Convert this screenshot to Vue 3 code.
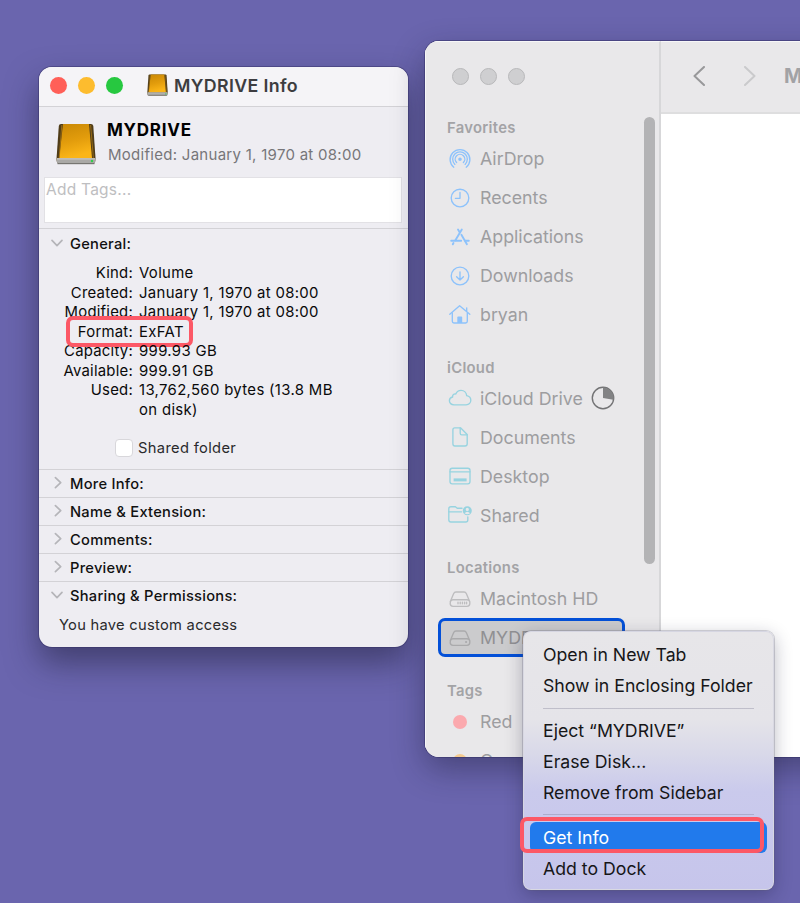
<template>
  <div class="screen">
    <section class="window info">
      <header class="info-title">
        <span class="light red"></span>
        <span class="light yellow"></span>
        <span class="light green"></span>
        <DriveIcon class="drive-small" />
        <h1>MYDRIVE Info</h1>
      </header>

      <div class="summary">
        <div class="summary-head">
          <DriveIcon class="drive-large" />
          <div>
            <h2>MYDRIVE</h2>
            <p class="modified">Modified: January 1, 1970 at 08:00</p>
          </div>
        </div>
        <div class="tags-input">Add Tags...</div>
      </div>

      <div class="general">
        <div class="section-head">
          <Chevron open />
          <span>General:</span>
        </div>
        <dl>
          <template v-for="row in details" :key="row.label">
            <dt>{{ row.label }}:</dt>
            <dd>
              {{ row.value }}
              <span v-if="row.label === 'Format'" class="mark mark-format"></span>
            </dd>
          </template>
        </dl>
        <label class="shared-folder">
          <span class="checkbox"></span>
          <span>Shared folder</span>
        </label>
      </div>

      <div v-for="name in sections" :key="name" class="section-head collapsed">
        <Chevron />
        <span>{{ name }}:</span>
      </div>
      <div class="section-head collapsed">
        <Chevron open />
        <span>Sharing &amp; Permissions:</span>
      </div>
      <p class="access">You have custom access</p>
    </section>

    <section class="window finder">
      <aside class="sidebar">
        <div class="inactive-lights">
          <span v-for="n in 3" :key="n"></span>
        </div>
        <div v-for="group in groups" :key="group.title" class="group">
          <h3>{{ group.title }}</h3>
          <ul>
            <li v-for="item in group.items" :key="item.name" :class="{ selected: item.selected }">
              <span v-if="item.dot" class="dot" :class="item.dot"></span>
              <svg v-else class="icon" :class="[group.tone, `icon-${item.icon}`]" viewBox="0 0 24 24">
                <path v-for="d in icons[item.icon].lines" :key="d" :d="d" />
                <path v-for="d in icons[item.icon].fills" :key="d" :d="d" class="solid" />
              </svg>
              <span class="name">{{ item.name }}</span>
              <svg v-if="item.progress" class="progress" viewBox="0 0 24 24">
                <circle cx="12" cy="12" r="10.7" />
                <path d="M12 12V1.5A10.5 10.5 0 0 1 22.4 13.8Z" />
              </svg>
            </li>
          </ul>
        </div>
        <div class="scrollbar"></div>
      </aside>
      <main class="content">
        <div class="toolbar">
          <svg class="nav" viewBox="0 0 12 20"><path d="M11 1 1.5 10 11 19" /></svg>
          <svg class="nav forward" viewBox="0 0 12 20"><path d="M1 1 10.5 10 1 19" /></svg>
          <span class="path-title">MYDRIVE</span>
        </div>
      </main>
    </section>

    <nav class="menu">
      <template v-for="(block, i) in menu" :key="i">
        <hr v-if="i > 0">
        <button v-for="item in block" :key="item" :class="{ active: item === 'Get Info' }">
          <span>{{ item }}</span>
          <i v-if="item === 'Get Info'" class="mark mark-info"></i>
        </button>
      </template>
    </nav>
  </div>
</template>

<script setup>
import { h } from 'vue'

const details = [
  { label: 'Kind', value: 'Volume' },
  { label: 'Created', value: 'January 1, 1970 at 08:00' },
  { label: 'Modified', value: 'January 1, 1970 at 08:00' },
  { label: 'Format', value: 'ExFAT' },
  { label: 'Capacity', value: '999.93 GB' },
  { label: 'Available', value: '999.91 GB' },
  { label: 'Used', value: '13,762,560 bytes (13.8 MB on disk)' }
]

const sections = ['More Info', 'Name & Extension', 'Comments', 'Preview']

const groups = [
  {
    title: 'Favorites',
    tone: 'blue',
    items: [
      { name: 'AirDrop', icon: 'airdrop' },
      { name: 'Recents', icon: 'clock' },
      { name: 'Applications', icon: 'apps' },
      { name: 'Downloads', icon: 'download' },
      { name: 'bryan', icon: 'home' }
    ]
  },
  {
    title: 'iCloud',
    tone: 'teal',
    items: [
      { name: 'iCloud Drive', icon: 'cloud', progress: true },
      { name: 'Documents', icon: 'doc' },
      { name: 'Desktop', icon: 'desktop' },
      { name: 'Shared', icon: 'shared' }
    ]
  },
  {
    title: 'Locations',
    tone: 'gray',
    items: [
      { name: 'Macintosh HD', icon: 'internal' },
      { name: 'MYDRIVE', icon: 'external', selected: true }
    ]
  },
  {
    title: 'Tags',
    tone: 'gray',
    items: [
      { name: 'Red', dot: 'tag-red' },
      { name: 'Orange', dot: 'tag-orange' }
    ]
  }
]

const icons = {
  airdrop: {
    lines: [
      'M5.8 20.2A9.9 9.9 0 1 1 18.2 20.2',
      'M6.9 17.4A7.3 7.3 0 1 1 17.1 17.4',
      'M8.6 15.6A4.8 4.8 0 1 1 15.4 15.6'
    ],
    fills: ['M10.2 12.2a1.8 1.8 0 1 0 3.6 0a1.8 1.8 0 1 0-3.6 0Z']
  },
  clock: {
    lines: ['M3.2 12a8.8 8.8 0 1 0 17.6 0a8.8 8.8 0 1 0-17.6 0Z', 'M12 6.4V12.3H7.4']
  },
  apps: {
    lines: ['M10 4.5 11.8 7.5M13.8 4.5 7.4 15.3', 'M13.4 9.8 18.9 19.2', 'M3.2 15.7H13.2M17.2 15.7H20.8', 'M5.5 18 4.8 19.3'],
    fills: []
  },
  download: {
    lines: ['M3.2 12a8.8 8.8 0 1 0 17.6 0a8.8 8.8 0 1 0-17.6 0Z', 'M12 7.8V16M8.6 12.7 12 16 15.4 12.7']
  },
  home: {
    lines: ['M1.8 11.2 11.6 2.8 21.8 11.2', 'M4.3 10V18.3Q4.3 20 6 20H17.6Q19.3 20 19.3 18.3V10', 'M18.7 4.8V8'],
    fills: ['M9.3 20V14.4Q9.3 13.5 10.2 13.5H13.4Q14.2 13.5 14.2 14.4V20Z']
  },
  cloud: {
    lines: ['M6 18.8C3.2 18.8 1.4 17 1.4 14.8C1.4 12.7 2.9 11.3 4.6 11C4.4 8.9 6 7.6 7.8 8C8.8 5.6 10.8 4.3 13 4.3C16.2 4.3 18.5 6.7 18.7 9.7C21.2 10.2 22.8 12 22.8 14.3C22.8 16.9 20.8 18.8 18.1 18.8Z']
  },
  doc: {
    lines: ['M6.7 2.8H12.5L19.2 9.5V18.8Q19.2 21 17 21H7Q4.9 21 4.9 18.8V4.8Q4.9 2.8 6.7 2.8Z', 'M12.2 3V8.2Q12.2 9.8 13.8 9.8H19']
  },
  desktop: {
    lines: ['M4.2 4.2H19.8Q22 4.2 22 6.4V17.6Q22 19.8 19.8 19.8H4.2Q2 19.8 2 17.6V6.4Q2 4.2 4.2 4.2Z', 'M2 7.8H22'],
    fills: ['M5.6 14.4H18.6V17.4H5.6Z']
  },
  shared: {
    lines: [
      'M14 5.2H9.2L7.4 3.7H3Q.8 3.7.8 5.8V16.8Q.8 19 3 19H17.8Q19.8 19 19.8 17V13.8',
      'M.8 8.8H13.6'
    ],
    fills: ['M14.8 7.7a4.5 4.5 0 1 0 9 0a4.5 4.5 0 1 0-9 0ZM17.7 6.4a1.6 1.6 0 1 1 3.2 0a1.6 1.6 0 1 1-3.2 0ZM16.5 10.3Q19.3 7.2 22.1 10.3Q19.3 12.4 16.5 10.3Z']
  },
  internal: {
    lines: [
      'M2.2 14.8 5.6 6.7Q6.3 5 8 5H16Q17.7 5 18.4 6.7L21.8 14.8V16.5Q21.8 19.3 19 19.3H5Q2.2 19.3 2.2 16.5Q2.2 12.7 5 12.7H19Q21.8 12.7 21.8 15.5',
      'M10 15.2V16.8M12.2 15.2V16.8M14.4 15.2V16.8M16.6 15.2V16.8M18.6 15.2V16.8'
    ]
  },
  external: {
    lines: ['M2.2 14.8 5.6 6.7Q6.3 5 8 5H16Q17.7 5 18.4 6.7L21.8 14.8V16.5Q21.8 19.3 19 19.3H5Q2.2 19.3 2.2 16.5Q2.2 12.7 5 12.7H19Q21.8 12.7 21.8 15.5'],
    fills: ['M17 16a1.1 1.1 0 1 0 2.2 0a1.1 1.1 0 1 0-2.2 0Z']
  }
}

const menu = [
  ['Open in New Tab', 'Show in Enclosing Folder'],
  ['Eject “MYDRIVE”', 'Erase Disk...', 'Remove from Sidebar'],
  ['Get Info', 'Add to Dock']
]

// disclosure arrow of the info panel
function Chevron(props) {
  const open = props.open !== undefined && props.open !== false
  return h('svg', { class: 'chevron', viewBox: '0 0 14 14' }, [
    h('path', { d: open ? 'M2 4.3 7 9.6 12 4.3' : 'M5.4 1.6 10.7 6.6 5.4 11.6' })
  ])
}
Chevron.props = ['open']

// orange external disk
function DriveIcon() {
  return h('svg', { viewBox: '0 0 40 42' }, [
    h('defs', [
      h('linearGradient', { id: 'gold', x1: 0, y1: 0, x2: 0.25, y2: 1 }, [
        h('stop', { offset: 0, 'stop-color': '#c98805' }),
        h('stop', { offset: 0.55, 'stop-color': '#e29c0c' }),
        h('stop', { offset: 1, 'stop-color': '#fbb517' })
      ])
    ]),
    h('path', { d: 'M5 1H35Q37 1 37.3 3L39.5 35Q39.5 41 36.5 41H3.5Q.5 41 .5 36L2.8 3Q3 1 5 1Z', fill: '#4f3c18' }),
    h('path', { d: 'M7 1H33L36 35H3.2Z', fill: 'url(#gold)' }),
    h('path', { d: 'M5.8 2 3.2 35M34.6 2 37.4 35', stroke: '#a87512', 'stroke-width': 0.8, fill: 'none' }),
    h('path', { d: 'M.8 35.4H39.2V38.6Q39.2 41 36.8 41H3.2Q.8 41 .8 38.6Z', fill: '#aaa9a6' }),
    h('path', { d: 'M1 35.8H39', stroke: '#deddda', 'stroke-width': 1 }),
    h('path', { d: 'M1.5 40.7H38.5', stroke: '#65635f', 'stroke-width': 0.9 }),
    h('circle', { cx: 36, cy: 38, r: 1.2, fill: '#2fd04a' })
  ])
}
</script>

<style>
body {
  background: #6a65ae;
}
</style>

<style scoped>
.screen {
  position: relative;
  width: 800px;
  height: 903px;
  overflow: hidden;
  background: #6a65ae;
  font-family: Inter, "Liberation Sans", sans-serif;
  color: #111;
}

h1, h2, h3, p, ul, dl, dd {
  margin: 0;
  padding: 0;
}

.window {
  position: absolute;
  box-sizing: border-box;
  overflow: hidden;
}

/* Info window */
.info {
  left: 39px;
  top: 67px;
  width: 369px;
  height: 580px;
  border-radius: 13px;
  background: #eeedf2;
  box-shadow: 0 0 0 1px rgba(50, 46, 100, 0.45), 0 16px 32px rgba(25, 25, 50, 0.5);
  font-size: 14.7px;
}

.info-title {
  display: flex;
  align-items: center;
  box-sizing: border-box;
  height: 40px;
  padding: 0 0 2px 11px;
  background: #f5f4f7;
  border-bottom: 1px solid #d3d2d6;
}

.light {
  width: 17px;
  height: 17px;
  margin-right: 11px;
  border-radius: 50%;
}

.light.red { background: #ff5f58; }
.light.yellow { background: #fdbc2e; }
.light.green { background: #27c840; }

.drive-small {
  width: 21px;
  height: 22px;
  margin: -2px 6px 0 13px;
}

h1 {
  font-size: 17.8px;
  font-weight: 600;
  letter-spacing: 0.35px;
  color: #3d3d40;
}

.summary {
  box-sizing: border-box;
  height: 122px;
  padding: 11px 6px 0 5px;
  border-bottom: 1px solid #d3d2d6;
}

.summary-head {
  display: flex;
  height: 59px;
}

.drive-large {
  width: 40px;
  height: 42px;
  margin: 5px 11px 0 12px;
}

h2 {
  padding-top: 2px;
  font-size: 17px;
  line-height: 21px;
  font-weight: 700;
  letter-spacing: 0.75px;
  color: #000;
}

.modified {
  padding: 4px 0 0 1px;
  font-size: 15px;
  line-height: 20px;
  letter-spacing: 0.28px;
  color: #777679;
}

.tags-input {
  box-sizing: border-box;
  height: 46px;
  padding-left: 1px;
  border: 1px solid #e2e1e5;
  background: #fff;
  font-size: 15.5px;
  line-height: 23px;
  letter-spacing: 0.25px;
  color: #bebec1;
}

.general {
  box-sizing: border-box;
  height: 240px;
}

.section-head {
  display: flex;
  align-items: center;
  box-sizing: border-box;
  height: 28px;
  padding-left: 11px;
  font-weight: 500;
  letter-spacing: 0.25px;
  color: #111;
}

.general .section-head {
  height: 30px;
}

.section-head.collapsed {
  border-top: 1px solid #d3d2d6;
  padding-top: 1px;
}

.chevron {
  width: 14px;
  height: 14px;
  margin-right: 6px;
  margin-top: -2px;
  fill: none;
  stroke: #b5b5b9;
  stroke-width: 1.7;
  stroke-linecap: round;
  stroke-linejoin: round;
}

dl {
  display: grid;
  grid-template-columns: 94px 210px;
  column-gap: 6px;
  padding-top: 5.4px;
  font-size: 14.9px;
  line-height: 19.45px;
  letter-spacing: 0.34px;
  color: #0a0a0a;
}

dt {
  text-align: right;
  letter-spacing: 0.24px;
}

dd {
  position: relative;
}

.mark {
  position: absolute;
  box-sizing: border-box;
  border: 4px solid #fc5866;
  border-radius: 7px;
}

.mark-format {
  left: -73px;
  top: -7px;
  width: 127px;
  height: 31px;
}

.shared-folder {
  display: flex;
  align-items: center;
  gap: 5px;
  margin: 19px 0 0 76px;
  letter-spacing: 0.34px;
  color: #2a2a2c;
}

.checkbox {
  box-sizing: border-box;
  width: 18px;
  height: 18px;
  border: 1px solid #d8d7db;
  border-radius: 4px;
  background: #fff;
}

.access {
  padding: 6px 0 0 20px;
  line-height: 20px;
  letter-spacing: 0.28px;
  color: #2a2a2c;
}

/* Finder window */
.finder {
  left: 425px;
  top: 41px;
  width: 500px;
  height: 716px;
  display: flex;
  border-radius: 14px;
  background: #fff;
  box-shadow: 0 0 0 1px rgba(50, 46, 100, 0.5), 0 12px 32px rgba(25, 25, 50, 0.42);
}

.sidebar {
  position: relative;
  box-sizing: border-box;
  width: 236px;
  height: 716px;
  padding: 26px 0 0 21px;
  border-top: 1px solid #f7f7f8;
  border-left: 1px solid #f7f7f8;
  border-right: 2px solid #d7d7d9;
  background: #e9e8ea;
  color: #9d9da0;
}

.inactive-lights {
  display: flex;
  gap: 11px;
  height: 48px;
  padding-left: 5px;
}

.inactive-lights span {
  box-sizing: border-box;
  width: 17px;
  height: 17px;
  border: 1px solid #b8b8ba;
  border-radius: 50%;
  background: #cfcfd1;
}

.group {
  margin-bottom: 21.7px;
}

h3 {
  height: 23px;
  font-size: 14.8px;
  line-height: 25px;
  font-weight: 600;
  letter-spacing: 0.3px;
  color: #a3a3a6;
}

ul {
  list-style: none;
  margin-left: -9px;
}

li {
  display: flex;
  align-items: center;
  box-sizing: border-box;
  width: 187px;
  height: 39px;
  padding-left: 10px;
  font-size: 17.8px;
}

li.selected {
  border: 3px solid #0350d8;
  border-radius: 7px;
  padding-left: 7px;
  background: #cbcbcd;
  color: #909093;
}

.icon {
  flex: none;
  width: 24px;
  height: 24px;
  margin-right: 8px;
  fill: none;
  stroke: currentColor;
  stroke-width: 1.35;
  stroke-linecap: round;
  stroke-linejoin: round;
}

.icon-apps {
  stroke-width: 1.9;
}

.icon .solid {
  fill: currentColor;
  fill-rule: evenodd;
  stroke: none;
}

.icon.blue { color: #8dc2fb; }
.icon.teal { color: #97d3e0; }
.icon.gray { color: #bdbdbf; }
.selected .icon.gray { color: #aaaaac; }

.progress {
  width: 24px;
  height: 24px;
  margin-left: 8px;
}

.progress circle {
  fill: none;
  stroke: #737375;
  stroke-width: 1.4;
}

.progress path {
  fill: #828284;
}

.dot {
  width: 14px;
  height: 14px;
  margin: 0 13px 0 5px;
  border-radius: 50%;
}

.tag-red { background: #fba9ae; }
.tag-orange { background: #f5cb90; }

.scrollbar {
  position: absolute;
  right: 4px;
  top: 75px;
  width: 11px;
  height: 447px;
  border-radius: 6px;
  background: #b3b3b5;
}

.content {
  flex: 1;
}

.toolbar {
  display: flex;
  align-items: center;
  box-sizing: border-box;
  height: 73px;
  padding: 0 0 3px 32px;
  border-top: 1px solid #f7f7f8;
  border-bottom: 2px solid #dededf;
  background: #e9e8ea;
}

.nav {
  width: 12px;
  height: 20px;
  fill: none;
  stroke: #98989a;
  stroke-width: 2;
  stroke-linecap: round;
  stroke-linejoin: round;
}

.nav.forward {
  margin: 0 28px 0 39px;
  stroke: #cacacc;
}

.path-title {
  font-size: 20px;
  font-weight: 700;
  color: #a2a2a5;
}

/* Context menu */
.menu {
  position: absolute;
  left: 523px;
  top: 631px;
  box-sizing: border-box;
  width: 251px;
  height: 259px;
  padding: 7.5px 6px 0;
  border: 1px solid rgba(215, 215, 225, 0.9);
  border-radius: 8px;
  background: linear-gradient(#e7e6e9 0, #e5e4e9 34%, #d8d8e9 48%, #cacaec 62%, #c6c5eb 100%);
  box-shadow: 0 0 0 1px rgba(90, 90, 110, 0.25), 0 5px 18px rgba(20, 20, 50, 0.3);
}

.menu button {
  position: relative;
  display: flex;
  align-items: center;
  width: 237px;
  height: 30.7px;
  padding: 0 0 0 13px;
  border: 0;
  border-radius: 6px;
  background: none;
  font-family: inherit;
  font-size: 17.7px;
  color: #161618;
  white-space: nowrap;
}

.menu button.active {
  background: #217aec;
  color: #fff;
}

.menu hr {
  width: 211px;
  height: 1px;
  margin: 6.8px 0 6.8px 13px;
  border: 0;
  background: rgba(120, 120, 145, 0.35);
}

.mark-info {
  left: -10px;
  top: -5px;
  width: 244px;
  height: 36px;
}
</style>
